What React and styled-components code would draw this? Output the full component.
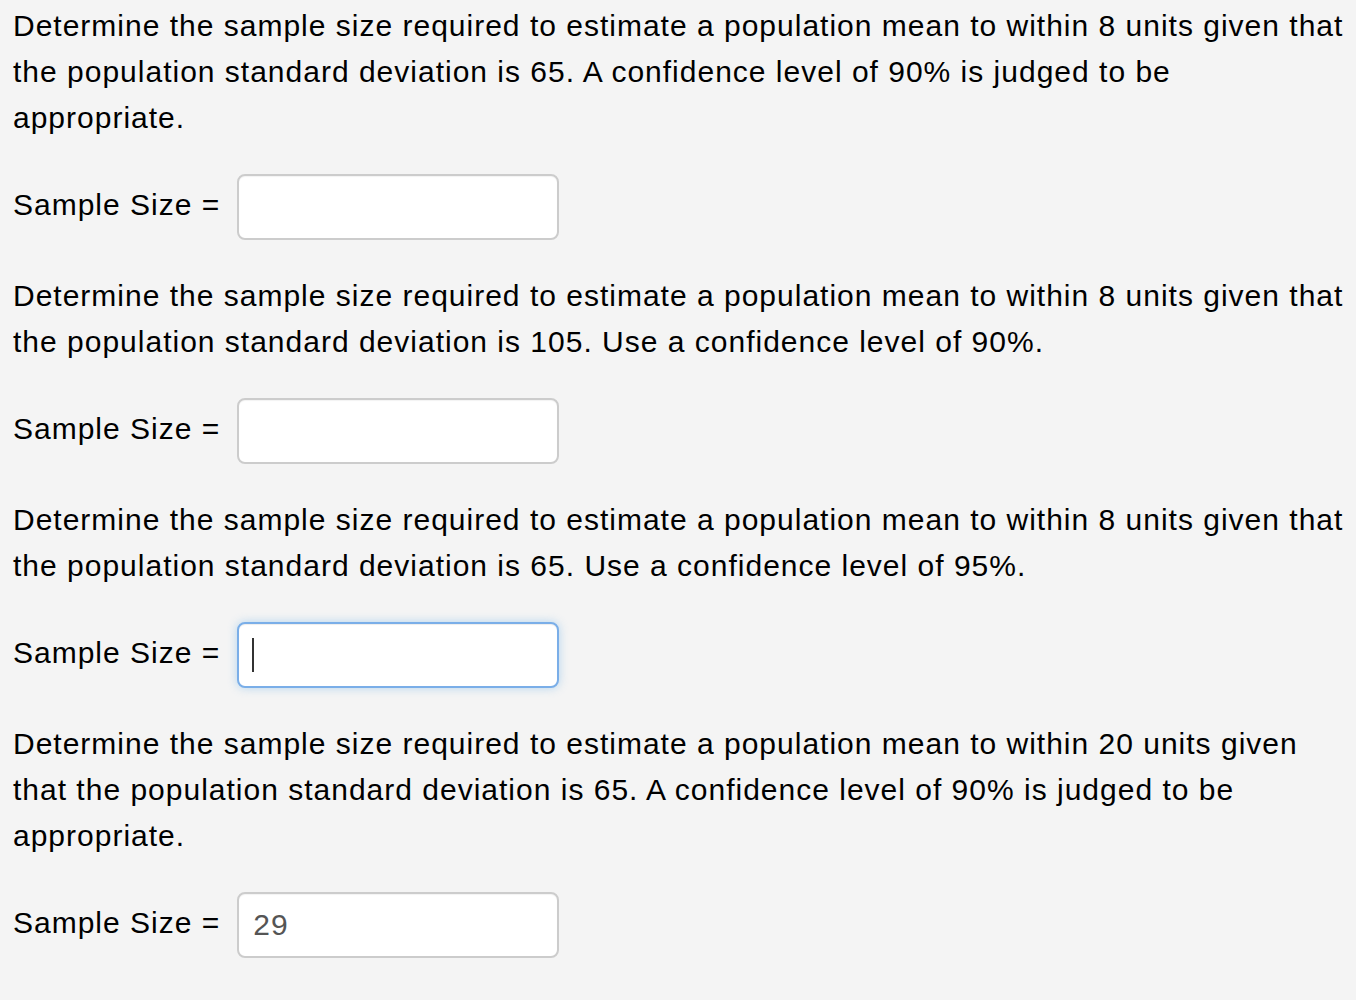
import React from "react";
import styled, { createGlobalStyle } from "styled-components";

const Global = createGlobalStyle`
  html, body { margin: 0; padding: 0; background: #f4f4f4; }
  body { font-family: "Liberation Sans", Arial, Helvetica, sans-serif; }
`;

const Page = styled.div`
  width: 1335px;
  padding: 3px 0 20px 13px;
  color: #000;
  font-size: 30px;
  letter-spacing: 1px;
  line-height: 46px;
`;

const Block = styled.section`
  display: flex;
  flex-direction: column;
`;

const Question = styled.p`
  margin: 0 0 33px 0;
`;

const Row = styled.div`
  display: flex;
  align-items: center;
  gap: 17px;
  margin-bottom: 33px;
`;

const Label = styled.span`
  white-space: nowrap;
  margin-bottom: 5px;
`;

const Field = styled.span`
  position: relative;
  display: inline-flex;
`;

const Input = styled.input`
  box-sizing: border-box;
  width: 322px;
  height: 66px;
  padding: 0 14px;
  font-family: inherit;
  font-size: 30px;
  letter-spacing: 1px;
  color: #555;
  background: #fff;
  border: 2px solid ${(p) => (p.$focused ? "#7aaee8" : "#cccccc")};
  border-radius: 8px;
  outline: none;
  box-shadow: ${(p) =>
    p.$focused
      ? "inset 0 1px 1px rgba(0,0,0,.075), 0 0 10px rgba(102,175,233,.45)"
      : "inset 0 1px 1px rgba(0,0,0,.05)"};
`;

const Caret = styled.span`
  position: absolute;
  left: 15px;
  top: 16px;
  width: 2px;
  height: 34px;
  background: #333;
`;

const items = [
  {
    text: "Determine the sample size required to estimate a population mean to within 8 units given that the population standard deviation is 65. A confidence level of 90% is judged to be appropriate.",
    value: "",
  },
  {
    text: "Determine the sample size required to estimate a population mean to within 8 units given that the population standard deviation is 105. Use a confidence level of 90%.",
    value: "",
  },
  {
    text: "Determine the sample size required to estimate a population mean to within 8 units given that the population standard deviation is 65. Use a confidence level of 95%.",
    value: "",
    focused: true,
  },
  {
    text: "Determine the sample size required to estimate a population mean to within 20 units given that the population standard deviation is 65. A confidence level of 90% is judged to be appropriate.",
    value: "29",
  },
];

export default function App() {
  return (
    <>
      <Global />
      <Page>
        {items.map((it, i) => (
          <Block key={i}>
            <Question>{it.text}</Question>
            <Row>
              <Label>Sample Size =</Label>
              <Field>
                <Input
                  type="text"
                  defaultValue={it.value}
                  $focused={it.focused}
                  readOnly
                />
                {it.focused && <Caret />}
              </Field>
            </Row>
          </Block>
        ))}
      </Page>
    </>
  );
}
